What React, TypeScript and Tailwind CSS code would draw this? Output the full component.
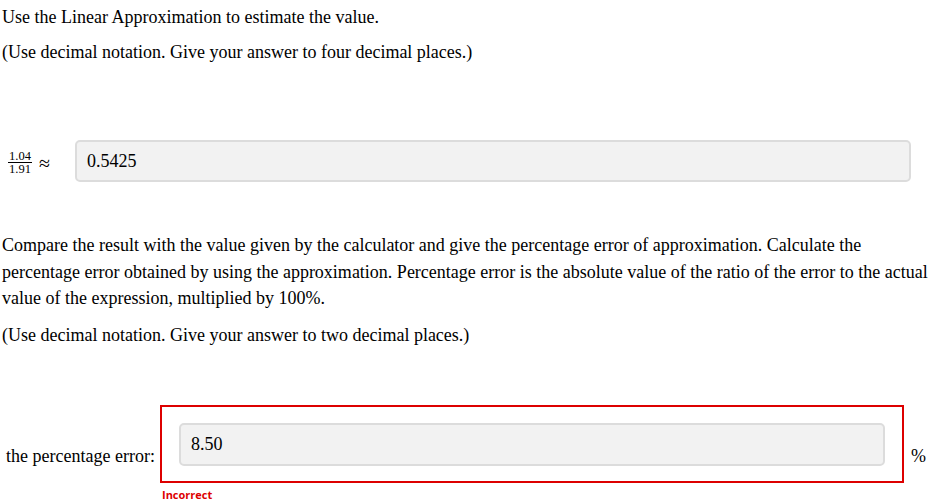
export default function App() {
  const serif = { fontFamily: '"Liberation Serif", "Times New Roman", serif' };
  return (
    <div className="w-[932px] h-[499px] overflow-hidden bg-white text-black pl-[2px]" style={serif}>
      <p className="mt-[5px] text-[18px] leading-6">Use the Linear Approximation to estimate the value.</p>
      <p className="mt-[11px] text-[18px] leading-6">(Use decimal notation. Give your answer to four decimal places.)</p>

      {/* first answer */}
      <div className="mt-[76px] flex items-center h-[42px]">
        <div className="flex items-center w-[73px] pl-[6px] pt-[3px]">
          <span className="inline-flex flex-col items-center text-[12.5px] leading-[12px]">
            <span className="px-[1px]">1.04</span>
            <span className="block w-full border-t border-black" />
            <span className="px-[1px]">1.91</span>
          </span>
          <span className="ml-[7px] text-[20px] leading-5">≈</span>
        </div>
        <div className="w-[836px] h-[42px] rounded-[5px] border-2 border-[#dcdcdc] bg-[#f2f2f2] flex items-center pl-[10px] text-[18px]">
          0.5425
        </div>
      </div>

      <p className="mt-[50px] text-[18px] leading-[26.5px] pr-[2px]">
        Compare the result with the value given by the calculator and give the percentage error of approximation. Calculate the percentage error obtained by using the approximation. Percentage error is the absolute value of the ratio of the error to the actual value of the expression, multiplied by 100%.
      </p>
      <p className="mt-[11px] text-[18px] leading-6">(Use decimal notation. Give your answer to two decimal places.)</p>

      {/* second answer */}
      <div className="mt-[58px] flex items-end">
        <span className="w-[158px] pl-[4px] pb-[17px] text-[18px] leading-5">the percentage error:</span>
        <div className="w-[744px] h-[78px] border-2 border-[#dd0000] px-[17px] pt-[16px]">
          <div className="h-[43px] rounded-[5px] border-2 border-[#dcdcdc] bg-[#f2f2f2] flex items-center pl-[10px] text-[18px]">
            8.50
          </div>
        </div>
        <span className="ml-[7px] pb-[17px] text-[18px] leading-5">%</span>
      </div>
      <div
        className="ml-[160px] mt-[4px] text-[11px] font-bold text-[#dd0000] leading-4"
        style={{ fontFamily: '"Open Sans", Arial, sans-serif' }}
      >
        Incorrect
      </div>
    </div>
  );
}
